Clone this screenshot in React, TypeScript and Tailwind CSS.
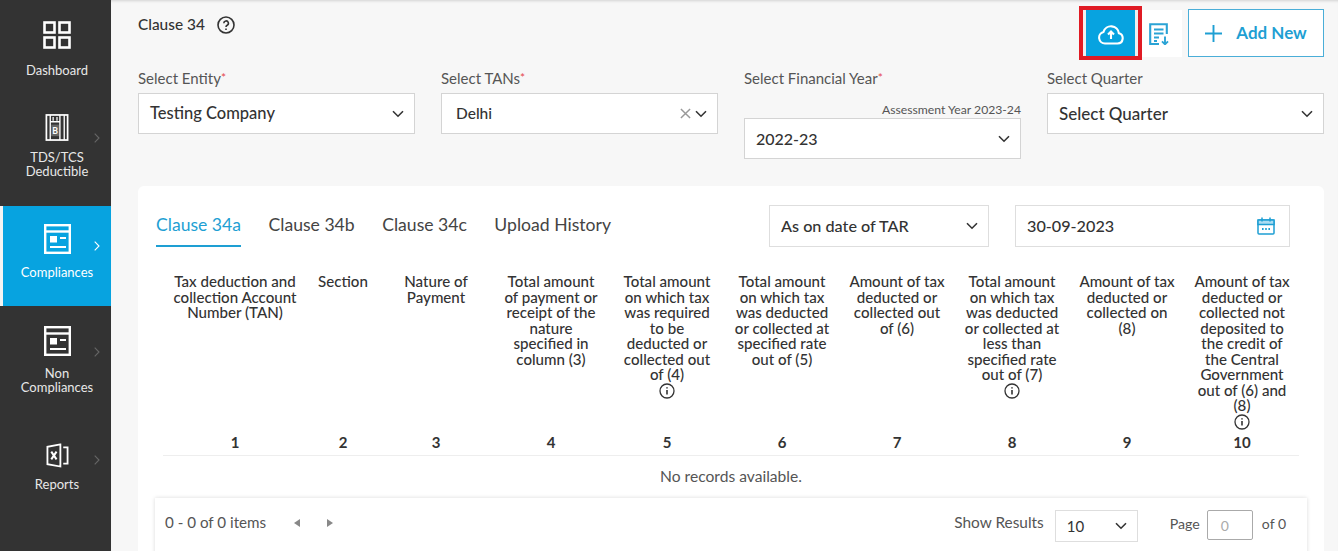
import React from "react";

const font = { fontFamily: "Lato, 'Open Sans', sans-serif" };

const Chevron = ({ className = "" }: { className?: string }) => (
  <svg viewBox="0 0 12 8" className={`w-[12px] h-[8px] ${className}`} fill="none" stroke="#333" strokeWidth="1.6">
    <path d="M1 1.2l5 5 5-5" />
  </svg>
);

const InfoIcon = () => (
  <svg viewBox="0 0 16 16" className="w-[16px] h-[16px] mx-auto" fill="none" stroke="#333" strokeWidth="1.3">
    <circle cx="8" cy="8" r="7" />
    <path d="M8 7v4.5M8 4.2v1.3" strokeWidth="1.6" />
  </svg>
);

const DashIcon = () => (
  <svg viewBox="0 0 28 28" className="w-[28px] h-[28px]" fill="none" stroke="#fff" strokeWidth="2.6">
    <rect x="1.5" y="1.5" width="10" height="10" />
    <rect x="16.5" y="1.5" width="10" height="10" />
    <rect x="1.5" y="16.5" width="10" height="10" />
    <rect x="16.5" y="16.5" width="10" height="10" />
  </svg>
);

const BookIcon = () => (
  <svg viewBox="0 0 24 28" className="w-[24px] h-[27px]" fill="none" stroke="#fff" strokeWidth="1.8">
    <rect x="1" y="1" width="22" height="26" />
    <path d="M19.5 1v26" strokeWidth="1.4" />
    <path d="M5 1v7h10V1M5 8v19M15 8v19" strokeWidth="1.4" />
    <path d="M8 3v4M12 3v4" strokeWidth="1.3" />
    <rect x="6" y="11" width="8" height="12" fill="#666" stroke="none" />
    <text x="10" y="21" textAnchor="middle" fontSize="9" fontWeight="700" fill="#fff" stroke="none" fontFamily="Lato">B</text>
  </svg>
);

const FormIcon = () => (
  <svg viewBox="0 0 27 30" className="w-[27px] h-[30px]" fill="none" stroke="#fff" strokeWidth="2.4">
    <rect x="1.2" y="1.2" width="24.6" height="27.6" />
    <path d="M1.2 7.5h24.6" />
    <rect x="6" y="12" width="7" height="6.5" fill="#fff" stroke="none" />
    <path d="M16 14h6M6 23h16" strokeWidth="2" />
  </svg>
);

const ExcelIcon = () => (
  <svg viewBox="0 0 24 26" className="w-[23px] h-[25px]" fill="none" stroke="#fff" strokeWidth="1.9">
    <path d="M15 1.5L1.5 4v18l13.5 2.5z" />
    <path d="M18 4.5h4.5v17H18" />
    <path d="M5.5 9l5.5 8M11 9l-5.5 8" strokeWidth="2.1" />
  </svg>
);

const NavItem = ({
  icon,
  label,
  arrowTop,
  active,
  height,
  gap,
}: {
  icon: React.ReactNode;
  label: React.ReactNode;
  arrowTop?: string;
  active?: boolean;
  height: string;
  gap: string;
}) => (
  <div
    className={`relative flex flex-col items-center text-[13px] leading-[14px] text-center border-l-[3px] ${height} ${
      active ? "bg-[#07a3e0] text-white border-[#f4f4f4]" : "text-[#e8e8e8] border-transparent"
    }`}
  >
    <div className="h-[30px] flex items-center justify-center">{icon}</div>
    <div className={gap}>{label}</div>
    {arrowTop && (
      <svg
        viewBox="0 0 6 10"
        className={`w-[6px] h-[10px] absolute right-[11px] ${arrowTop}`}
        fill="none"
        stroke={active ? "#ffffff" : "#666"}
        strokeWidth="1.1"
      >
        <path d="M0.7 0.7l4.3 4.3-4.3 4.3" />
      </svg>
    )}
  </div>
);

const Label = ({ text, req }: { text: string; req?: boolean }) => (
  <div className="text-[15px] leading-[18px] text-[#555]">
    {text}
    {req && <span className="text-[#e5484d] text-[12px] align-top">*</span>}
  </div>
);

const SelectBox = ({ value, extra, textClass = "text-[16px]", pad = "pl-[11px]" }: { value: string; extra?: React.ReactNode; textClass?: string; pad?: string }) => (
  <div className={`h-[41px] bg-white border border-[#d4d4d4] flex items-center justify-between pr-[10px] ${pad}`}>
    <span className={`text-[#333] font-medium ${textClass}`}>{value}</span>
    <div className="flex items-center gap-[4px]">
      {extra}
      <Chevron />
    </div>
  </div>
);

const heads: { title: React.ReactNode; info?: boolean }[] = [
  { title: <>Tax deduction and<br />collection Account<br />Number (TAN)</> },
  { title: <>Section</> },
  { title: <>Nature of<br />Payment</> },
  { title: <>Total amount<br />of payment or<br />receipt of the<br />nature<br />specified in<br />column (3)</> },
  { title: <>Total amount<br />on which tax<br />was required<br />to be<br />deducted or<br />collected out<br />of (4)</>, info: true },
  { title: <>Total amount<br />on which tax<br />was deducted<br />or collected at<br />specified rate<br />out of (5)</> },
  { title: <>Amount of tax<br />deducted or<br />collected out<br />of (6)</> },
  { title: <>Total amount<br />on which tax<br />was deducted<br />or collected at<br />less than<br />specified rate<br />out of (7)</>, info: true },
  { title: <>Amount of tax<br />deducted or<br />collected on<br />(8)</> },
  { title: <>Amount of tax<br />deducted or<br />collected not<br />deposited to<br />the credit of<br />the Central<br />Government<br />out of (6) and<br />(8)</>, info: true },
];

export default function App() {
  return (
    <div style={font} className="w-[1338px] h-[551px] overflow-hidden flex bg-[#f7f7f7] text-[#333]">
      <aside className="w-[111px] h-full shrink-0 bg-[#333333] pt-[20px] flex flex-col">
        <NavItem icon={<DashIcon />} label="Dashboard" height="h-[92px]" gap="mt-[13px]" />
        <NavItem
          icon={<BookIcon />}
          label={<>TDS/TCS<br />Deductible</>}
          arrowTop="top-[21px]"
          height="h-[94px]"
          gap="mt-[8px]"
        />
        <NavItem
          icon={<FormIcon />}
          label="Compliances"
          arrowTop="top-[35px]"
          active
          height="h-[100px] pt-[18px]"
          gap="mt-[11px]"
        />
        <NavItem
          icon={<FormIcon />}
          label={<>Non<br />Compliances</>}
          arrowTop="top-[41px]"
          height="h-[134px] pt-[20px]"
          gap="mt-[10px]"
        />
        <NavItem icon={<ExcelIcon />} label="Reports" arrowTop="top-[15px]" height="h-[100px]" gap="mt-[7px]" />
      </aside>

      <main className="flex-1 pl-[27px] pr-[14px] shadow-[inset_0_3px_3px_-2px_rgba(0,0,0,0.15)]">
        <div className="flex justify-between h-[69px] pt-[6px]">
          <div className="flex items-center gap-[12px] h-[37px]">
            <span className="text-[15.4px] font-medium text-[#333]">Clause 34</span>
            <svg viewBox="0 0 18 18" className="w-[18px] h-[18px]" fill="none" stroke="#333" strokeWidth="1.6">
              <circle cx="9" cy="9" r="8" />
              <path d="M6.8 7.2a2.3 2.3 0 1 1 3.4 2c-.8.5-1.2.9-1.2 1.8M9 12.6v1.3" />
            </svg>
          </div>
          <div className="flex items-start">
            <div className="w-[63px] h-[54px] border-[4px] border-[#e01b24] bg-[#f0f0f0] px-[3px]">
              <div className="h-full bg-[#07a3e0] flex items-center justify-center">
                <svg viewBox="0 0 26 23" className="w-[26px] h-[23px]" fill="none" stroke="#fff" strokeWidth="2.1">
                  <path d="M7 21.5h12.5a5.2 5.2 0 0 0 1.4-10.2 7.9 7.9 0 0 0-15.4-1.4A5.9 5.9 0 0 0 7 21.5z" />
                  <path d="M13 17V10M10 12.6l3-3 3 3" />
                </svg>
              </div>
            </div>
            <div className="w-[40px] h-[47px] mt-[4px] bg-white flex items-center justify-start pl-[7px]">
              <svg viewBox="0 0 20 22" className="w-[20px] h-[22px]" fill="none" stroke="#2aa3d5" strokeWidth="2.1">
                <path d="M10 21H1.2V1.2h16.6V11" />
                <path d="M5 6.5h9.5M5 10.5h9.5M5 14.5h5M5 18h3" strokeWidth="1.9" />
                <path d="M16 13.5V21M13 18.3l3 3 3-3" strokeWidth="1.9" />
              </svg>
            </div>
            <div className="ml-[6px] mt-[3px] w-[136px] h-[48px] bg-white border border-[#4aaed8] flex items-center justify-center gap-[14px] text-[#1e9fd3]">
              <svg viewBox="0 0 16 16" className="w-[17px] h-[17px]" fill="none" stroke="#1e9fd3" strokeWidth="1.8">
                <path d="M8 0v16M0 8h16" />
              </svg>
              <span className="text-[17px] font-bold">Add New</span>
            </div>
          </div>
        </div>

        <div className="grid grid-cols-[277px_277px_277px_277px] gap-x-[26px] h-[117px]">
          <div>
            <Label text="Select Entity" req />
            <div className="mt-[6px]">
              <SelectBox value="Testing Company" textClass="text-[16.5px]" />
            </div>
          </div>
          <div>
            <Label text="Select TANs" req />
            <div className="mt-[6px]">
              <SelectBox
                value="Delhi"
                pad="pl-[14px]"
                textClass="text-[15.5px]"
                extra={
                  <svg viewBox="0 0 12 12" className="w-[11px] h-[11px]" fill="none" stroke="#999" strokeWidth="1.6">
                    <path d="M1 1l10 10M11 1L1 11" />
                  </svg>
                }
              />
            </div>
          </div>
          <div>
            <Label text="Select Financial Year" req />
            <div className="text-right text-[12.2px] leading-[14px] text-[#555] mt-[16px] mb-[1px]">Assessment Year 2023-24</div>
            <SelectBox value="2022-23" />
          </div>
          <div>
            <Label text="Select Quarter" />
            <div className="mt-[6px]">
              <SelectBox value="Select Quarter" textClass="text-[17px]" />
            </div>
          </div>
        </div>

        <section className="bg-white rounded-t-[6px] h-[365px] pt-[19px]">
          <div className="flex pl-[18px] pr-[34px] h-[42px]">
            <div className="flex gap-[27.5px] text-[17.6px] text-[#444]">
              <span className="text-[#1e9fd3] border-b-2 border-[#1e9fd3] h-[42px] leading-[40px]">Clause 34a</span>
              <span className="leading-[40px]">Clause 34b</span>
              <span className="leading-[40px]">Clause 34c</span>
              <span className="leading-[40px]">Upload History</span>
            </div>
            <div className="ml-auto flex gap-[26px]">
              <div className="w-[220px] h-[42px] border border-[#dedede] flex items-center justify-between pl-[11px] pr-[10px]">
                <span className="text-[16.2px] font-medium">As on date of TAR</span>
                <Chevron />
              </div>
              <div className="w-[275px] h-[42px] border border-[#dedede] flex items-center justify-between pl-[11px] pr-[14px]">
                <span className="text-[16.2px] font-medium">30-09-2023</span>
                <svg viewBox="0 0 18 18" className="w-[18px] h-[18px]" fill="none" stroke="#1e9fd3" strokeWidth="1.5">
                  <rect x="1" y="3" width="16" height="14" rx="1" />
                  <rect x="1" y="3" width="16" height="4.5" fill="#a9dcf2" />
                  <path d="M5 0.5v4M13 0.5v4" />
                  <path d="M5 12h1.6M8.2 12h1.6M11.4 12h1.6" strokeWidth="2" />
                </svg>
              </div>
            </div>
          </div>

          <div className="mx-[25px] mt-[27px] grid grid-cols-[144px_72px_114px_116px_116px_114px_116px_114px_116px_114px] text-[15.1px] leading-[15.5px] text-center font-medium text-[#333] h-[159px]">
            {heads.map((h, i) => (
              <div key={i}>
                {h.title}
                {h.info && <InfoIcon />}
              </div>
            ))}
          </div>
          <div className="mx-[25px] grid grid-cols-[144px_72px_114px_116px_116px_114px_116px_114px_116px_114px] text-[15px] h-[23px] leading-[18px] text-center font-bold border-b border-[#eeeeee]">
            {heads.map((_, i) => (
              <div key={i}>{i + 1}</div>
            ))}
          </div>
          <div className="h-[42px] flex items-center justify-center text-[15.6px] text-[#555]">No records available.</div>

          <div className="ml-[17px] mr-[17px] h-[60px] flex items-start shadow-[0_0_4px_rgba(0,0,0,0.15)] pl-[10px] pr-[21px] pt-[13px] text-[15.2px] text-[#555]">
            <span>0 - 0 of 0 items</span>
            <svg viewBox="0 0 40 8" className="w-[40px] h-[8px] ml-[28px] mt-[8px]" fill="#888">
              <path d="M6 0v8L0 4zM33 0v8l6-4z" />
            </svg>
            <div className="ml-auto flex items-start">
              <span className="text-[15.4px]">Show Results</span>
              <div className="ml-[11px] -mt-[1px] w-[83px] h-[32px] border border-[#dedede] flex items-center justify-between pl-[11px] pr-[10px] text-[15px] text-[#333]">
                10
                <Chevron />
              </div>
              <span className="ml-[32px] text-[14.2px] mt-[2px]">Page</span>
              <div className="ml-[7px] -mt-[1px] w-[46px] h-[30px] border border-[#aaaaaa] rounded-[2px] flex items-center pl-[13px] text-[14px] text-[#aaa]">0</div>
              <span className="ml-[9px] text-[14px] mt-[2px]">of 0</span>
            </div>
          </div>
        </section>
      </main>
    </div>
  );
}
